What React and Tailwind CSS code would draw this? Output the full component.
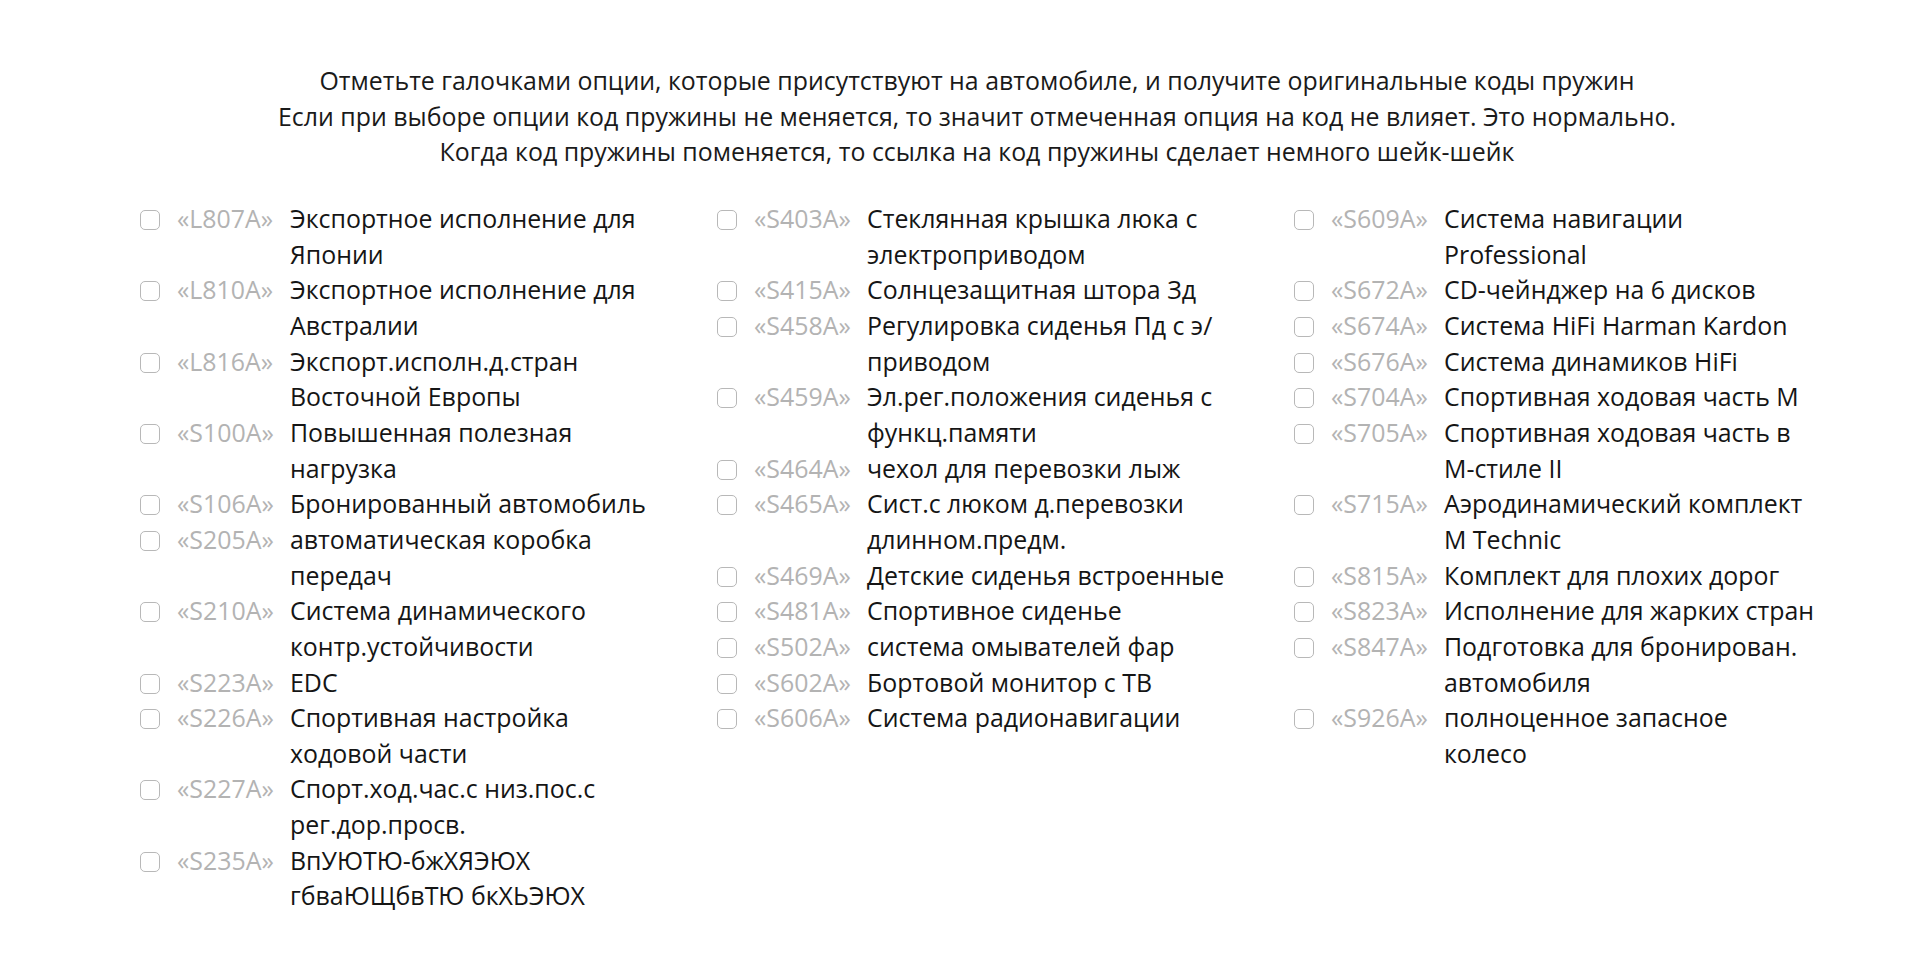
import React from 'react'

// each option's description is split into the lines it shows on
const columns = [
  [
    { code: 'L807A', lines: ['Экспортное исполнение для', 'Японии'] },
    { code: 'L810A', lines: ['Экспортное исполнение для', 'Австралии'] },
    { code: 'L816A', lines: ['Экспорт.исполн.д.стран', 'Восточной Европы'] },
    { code: 'S100A', lines: ['Повышенная полезная', 'нагрузка'] },
    { code: 'S106A', lines: ['Бронированный автомобиль'] },
    { code: 'S205A', lines: ['автоматическая коробка', 'передач'] },
    { code: 'S210A', lines: ['Система динамического', 'контр.устойчивости'] },
    { code: 'S223A', lines: ['EDC'] },
    { code: 'S226A', lines: ['Спортивная настройка', 'ходовой части'] },
    { code: 'S227A', lines: ['Спорт.ход.час.с низ.пос.с', 'рег.дор.просв.'] },
    { code: 'S235A', lines: ['ВпУЮТЮ-бжХЯЭЮХ', 'гбваЮЩбвТЮ бкХЬЭЮХ'] },
  ],
  [
    { code: 'S403A', lines: ['Стеклянная крышка люка с', 'электроприводом'] },
    { code: 'S415A', lines: ['Солнцезащитная штора Зд'] },
    { code: 'S458A', lines: ['Регулировка сиденья Пд с э/', 'приводом'] },
    { code: 'S459A', lines: ['Эл.рег.положения сиденья с', 'функц.памяти'] },
    { code: 'S464A', lines: ['чехол для перевозки лыж'] },
    { code: 'S465A', lines: ['Сист.с люком д.перевозки', 'длинном.предм.'] },
    { code: 'S469A', lines: ['Детские сиденья встроенные'] },
    { code: 'S481A', lines: ['Спортивное сиденье'] },
    { code: 'S502A', lines: ['система омывателей фар'] },
    { code: 'S602A', lines: ['Бортовой монитор с ТВ'] },
    { code: 'S606A', lines: ['Система радионавигации'] },
  ],
  [
    { code: 'S609A', lines: ['Система навигации', 'Professional'] },
    { code: 'S672A', lines: ['CD-чейнджер на 6 дисков'] },
    { code: 'S674A', lines: ['Система HiFi Harman Kardon'] },
    { code: 'S676A', lines: ['Система динамиков HiFi'] },
    { code: 'S704A', lines: ['Спортивная ходовая часть М'] },
    { code: 'S705A', lines: ['Спортивная ходовая часть в', 'М-стиле II'] },
    { code: 'S715A', lines: ['Аэродинамический комплект', 'M Technic'] },
    { code: 'S815A', lines: ['Комплект для плохих дорог'] },
    { code: 'S823A', lines: ['Исполнение для жарких стран'] },
    { code: 'S847A', lines: ['Подготовка для бронирован.', 'автомобиля'] },
    { code: 'S926A', lines: ['полноценное запасное', 'колесо'] },
  ],
]

const Option = ({ item }) => (
  <label className="flex items-start">
    <input
      type="checkbox"
      className="appearance-none shrink-0 w-[20px] h-[20px] mt-[9px] border border-[#b8b8b8] rounded-[5px] bg-white"
    />
    <span className="shrink-0 w-[113px] ml-[17px] text-[#b3b3b3]">«{item.code}»</span>
    <span className="flex flex-col text-[#151515]">
      {item.lines.map((line) => (
        <span key={line} className="whitespace-nowrap">{line}</span>
      ))}
    </span>
  </label>
)

export default function App() {
  return (
    <div className="min-h-screen bg-white font-['Open_Sans',sans-serif] text-[24.9px] leading-[35.65px] text-[#1a1a1a] pt-[63px]">
      {/* Intro */}
      <div className="pl-[34px] text-center">
        <p>Отметьте галочками опции, которые присутствуют на автомобиле, и получите оригинальные коды пружин</p>
        <p>Если при выборе опции код пружины не меняется, то значит отмеченная опция на код не влияет. Это нормально.</p>
        <p>Когда код пружины поменяется, то ссылка на код пружины сделает немного шейк-шейк</p>
      </div>

      {/* Options */}
      <div className="grid grid-cols-[577px_577px_577px] ml-[140px] mt-[31px]">
        {columns.map((col, i) => (
          <div key={i} className="flex flex-col">
            {col.map((item) => (
              <Option key={item.code} item={item} />
            ))}
          </div>
        ))}
      </div>
    </div>
  )
}
